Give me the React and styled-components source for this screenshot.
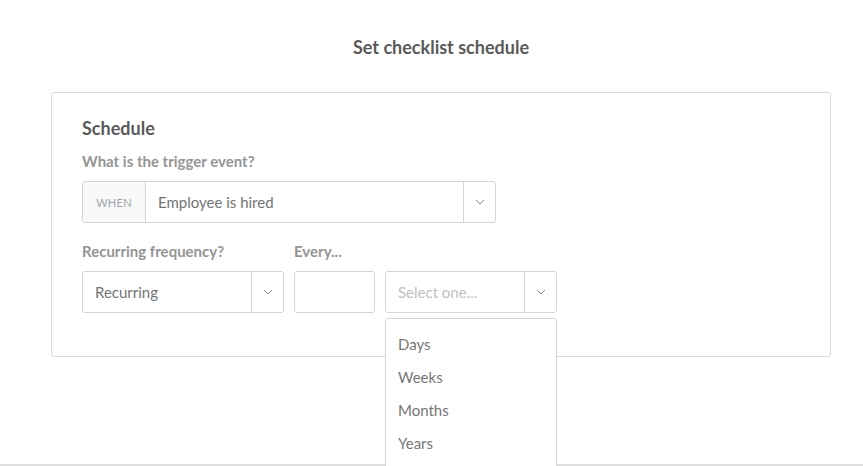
import React, { useState } from "react";
import styled, { createGlobalStyle } from "styled-components";

const GlobalStyle = createGlobalStyle`
  body {
    margin: 0;
    background: #fff;
    font-family: Lato, "Open Sans", "Liberation Sans", sans-serif;
    overflow: hidden;
  }
`;

const Chevron = () => (
  <svg width="10" height="6" viewBox="0 0 10 6" fill="none">
    <path d="M1 1l4 4 4-4" stroke="#8a8a8a" strokeWidth="1" />
  </svg>
);

const App = () => {
  const [unit] = useState("");
  const units = ["Days", "Weeks", "Months", "Years"];

  return (
    <Page>
      <GlobalStyle />
      <Title>Set checklist schedule</Title>
      <Card>
        <CardTitle>Schedule</CardTitle>
        <Label>What is the trigger event?</Label>
        <SelectBox width={414}>
          <Addon>WHEN</Addon>
          <Value>Employee is hired</Value>
          <Arrow>
            <Chevron />
          </Arrow>
        </SelectBox>
        <Row>
          <Field>
            <Label>Recurring frequency?</Label>
            <SelectBox width={202}>
              <Value>Recurring</Value>
              <Arrow>
                <Chevron />
              </Arrow>
            </SelectBox>
          </Field>
          <Field>
            <Label>Every...</Label>
            <Input type="text" />
          </Field>
          <Field>
            <Label>&nbsp;</Label>
            <SelectBox width={172}>
              <Value placeholder={!unit}>{unit || "Select one..."}</Value>
              <Arrow>
                <Chevron />
              </Arrow>
              <Menu>
                {units.map(u => (
                  <MenuItem key={u}>{u}</MenuItem>
                ))}
              </Menu>
            </SelectBox>
          </Field>
        </Row>
      </Card>
      <Footer />
    </Page>
  );
};

const Page = styled.div`
  padding-top: 36px;
`;

const Title = styled.h1`
  margin: 0 32px 0 51px;
  font-size: 18px;
  line-height: 22px;
  font-weight: 700;
  color: #5a5a5a;
  text-align: center;
`;

const Card = styled.div`
  margin: 34px 32px 0 51px;
  border: 1px solid #d9d9d9;
  border-radius: 3px;
  padding: 24px 30px 43px;
`;

const CardTitle = styled.h2`
  margin: 0 0 13px;
  font-size: 18px;
  line-height: 22px;
  font-weight: 700;
  color: #5a5a5a;
`;

const Label = styled.div`
  font-size: 15px;
  line-height: 19px;
  font-weight: 700;
  color: #959595;
  margin-bottom: 10px;
`;

const SelectBox = styled.div`
  position: relative;
  display: flex;
  align-items: stretch;
  width: ${p => p.width}px;
  height: 42px;
  box-sizing: border-box;
  border: 1px solid #d4d4d4;
  border-radius: 3px;
  background: #fff;
`;

const Addon = styled.div`
  display: flex;
  align-items: center;
  justify-content: center;
  width: 62px;
  background: #f7f8f8;
  border-right: 1px solid #d4d4d4;
  border-radius: 3px 0 0 3px;
  font-size: 11px;
  letter-spacing: 0.3px;
  color: #a0a4a8;
`;

const Value = styled.div`
  flex: 1;
  display: flex;
  align-items: center;
  padding-left: 12px;
  font-size: 15px;
  color: ${p => (p.placeholder ? "#c0c0c0" : "#747474")};
`;

const Arrow = styled.div`
  width: 31px;
  display: flex;
  align-items: center;
  justify-content: center;
  border-left: 1px solid #d4d4d4;
`;

const Row = styled.div`
  display: flex;
  gap: 10px;
  margin-top: 19px;
`;

const Field = styled.div`
  display: flex;
  flex-direction: column;
`;

const Input = styled.input`
  width: 81px;
  height: 42px;
  box-sizing: border-box;
  border: 1px solid #d4d4d4;
  border-radius: 3px;
  outline: none;
  padding: 0 12px;
  font-family: inherit;
  font-size: 15px;
  color: #747474;
`;

const Menu = styled.div`
  position: absolute;
  top: 46px;
  left: -1px;
  width: 172px;
  box-sizing: border-box;
  border: 1px solid #d4d4d4;
  border-radius: 3px;
  background: #fff;
  padding: 9px 0;
  z-index: 5;
`;

const MenuItem = styled.div`
  height: 33px;
  line-height: 33px;
  padding-left: 12px;
  font-size: 15px;
  color: #777;
`;

const Footer = styled.div`
  margin-top: 107px;
  border-top: 2px solid #dedede;
`;

export default App;
